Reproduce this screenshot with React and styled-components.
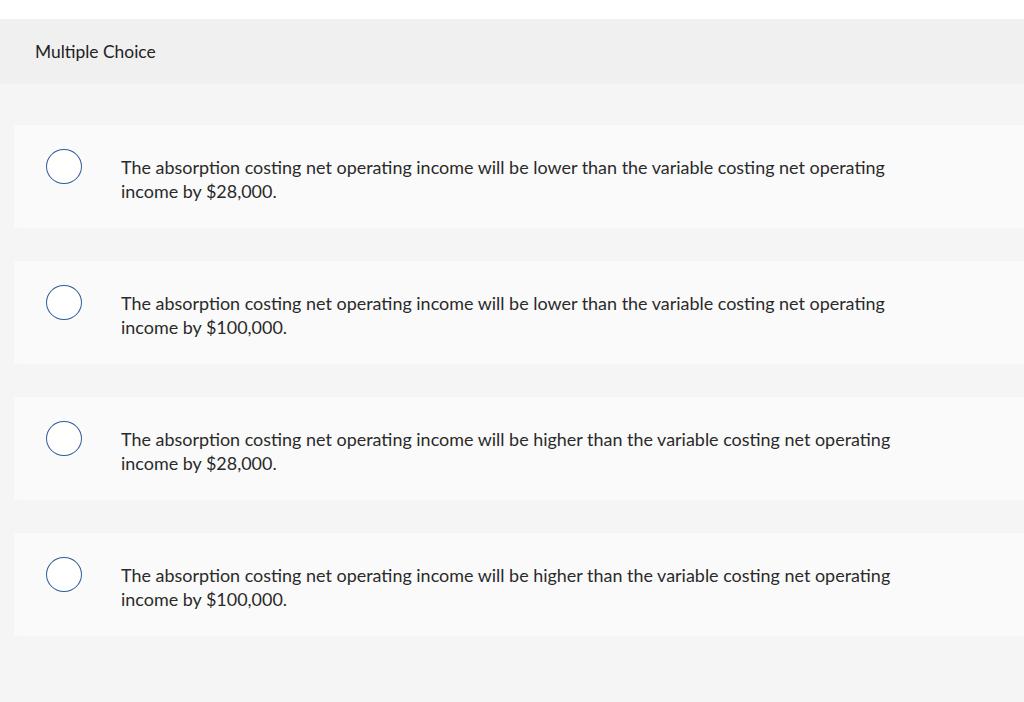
import React from "react";
import styled, { createGlobalStyle } from "styled-components";

const Global = createGlobalStyle`
  html, body { margin: 0; padding: 0; background: #ffffff; }
  body { font-family: "Lato", "Liberation Sans", sans-serif; }
`;

const Page = styled.div`
  width: 1024px;
  height: 702px;
  padding-top: 19px;
  box-sizing: border-box;
  display: flex;
  flex-direction: column;
  overflow: hidden;
`;

const Header = styled.div`
  height: 65px;
  background: #f0f0f0;
  display: flex;
  align-items: center;
  padding-left: 35px;
  font-size: 17.4px;
  color: #222;
`;

const Body = styled.div`
  flex: 1;
  background: #f5f5f5;
  padding: 41px 0 0 14px;
  display: flex;
  flex-direction: column;
  gap: 33px;
`;

const Card = styled.div`
  height: 103px;
  background: #fafafa;
  border-radius: 3px 0 0 3px;
  display: flex;
  align-items: flex-start;
  padding: 24px 0 0 32px;
  box-sizing: border-box;
`;

const Radio = styled.span`
  width: 34px;
  height: 33px;
  flex: none;
  border: 1.5px solid #2f5b98;
  border-radius: 50%;
  background: #ffffff;
`;

const Label = styled.div`
  margin-left: 39px;
  margin-top: 7px;
  font-size: 17.95px;
  line-height: 23.5px;
  color: #2a2a2a;
  width: 830px;
`;

const options = [
  ["lower", "$28,000"],
  ["lower", "$100,000"],
  ["higher", "$28,000"],
  ["higher", "$100,000"],
];

export default function App() {
  return (
    <>
      <Global />
      <Page>
        <Header>Multiple Choice</Header>
        <Body>
          {options.map(([dir, amt], i) => (
            <Card key={i}>
              <Radio />
              <Label>
                The absorption costing net operating income will be {dir} than the variable costing net operating
                <br />
                income by {amt}.
              </Label>
            </Card>
          ))}
        </Body>
      </Page>
    </>
  );
}
